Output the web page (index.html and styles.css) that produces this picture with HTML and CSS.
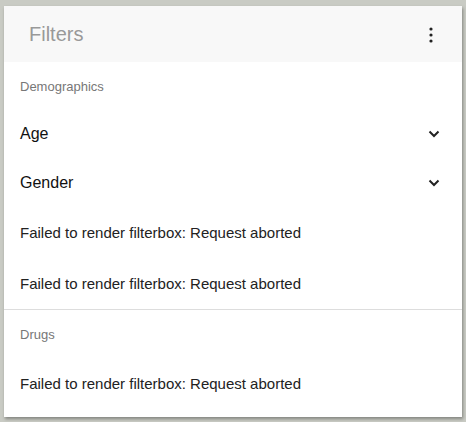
FILE: index.html
```html
<!DOCTYPE html>
<html>
<head>
<meta charset="utf-8">
<link rel="stylesheet" href="styles.css">
</head>
<body>
<div class="card">
  <div class="header">
    <span class="title">Filters</span>
    <svg class="kebab" width="4" height="16" viewBox="0 0 4 16"><circle cx="2" cy="2" r="1.6"/><circle cx="2" cy="8" r="1.6"/><circle cx="2" cy="14" r="1.6"/></svg>
  </div>
  <div class="section">
    <div class="label">Demographics</div>
    <div class="row select"><span>Age</span><svg class="chev" width="12" height="8" viewBox="0 0 12 8"><path d="M1.5 1.5 L6 6 L10.5 1.5"/></svg></div>
    <div class="row select gender"><span>Gender</span><svg class="chev" width="12" height="8" viewBox="0 0 12 8"><path d="M1.5 1.5 L6 6 L10.5 1.5"/></svg></div>
    <div class="row err">Failed to render filterbox: Request aborted</div>
    <div class="row err">Failed to render filterbox: Request aborted</div>
  </div>
  <div class="section">
    <div class="label">Drugs</div>
    <div class="row err">Failed to render filterbox: Request aborted</div>
  </div>
</div>
</body>
</html>
```
FILE: styles.css
```css
html, body {
  margin: 0;
  padding: 0;
}
body {
  background: #c9cbc4;
  width: 466px;
  height: 422px;
  padding: 6px 0 0 4px;
  box-sizing: border-box;
  font-family: "Liberation Sans", Arial, sans-serif;
}
.card {
  width: 458px;
  height: 411px;
  background: #fff;
  box-shadow: 1px 2px 3px rgba(0,0,0,0.35);
  overflow: hidden;
}
.header {
  height: 56px;
  background: #f8f8f8;
  display: flex;
  align-items: center;
  justify-content: space-between;
  padding: 0 29px 0 25px;
}
.title {
  font-size: 20px;
  color: #999;
}
.kebab {
  fill: #222;
  margin-top: 1px;
}
.section + .section {
  border-top: 1px solid #ddd;
}
.label {
  height: 48px;
  display: flex;
  align-items: center;
  padding-left: 16px;
  font-size: 13px;
  color: #777;
}
.row {
  display: flex;
  align-items: center;
  padding: 0 22px 0 16px;
}
.select {
  height: 48px;
  justify-content: space-between;
  font-size: 16px;
  color: #111;
}
.gender {
  height: 49px;
}
.chev {
  fill: none;
  stroke: #222;
  stroke-width: 2;
}
.err {
  height: 51px;
  font-size: 15px;
  color: #222;
}
```
